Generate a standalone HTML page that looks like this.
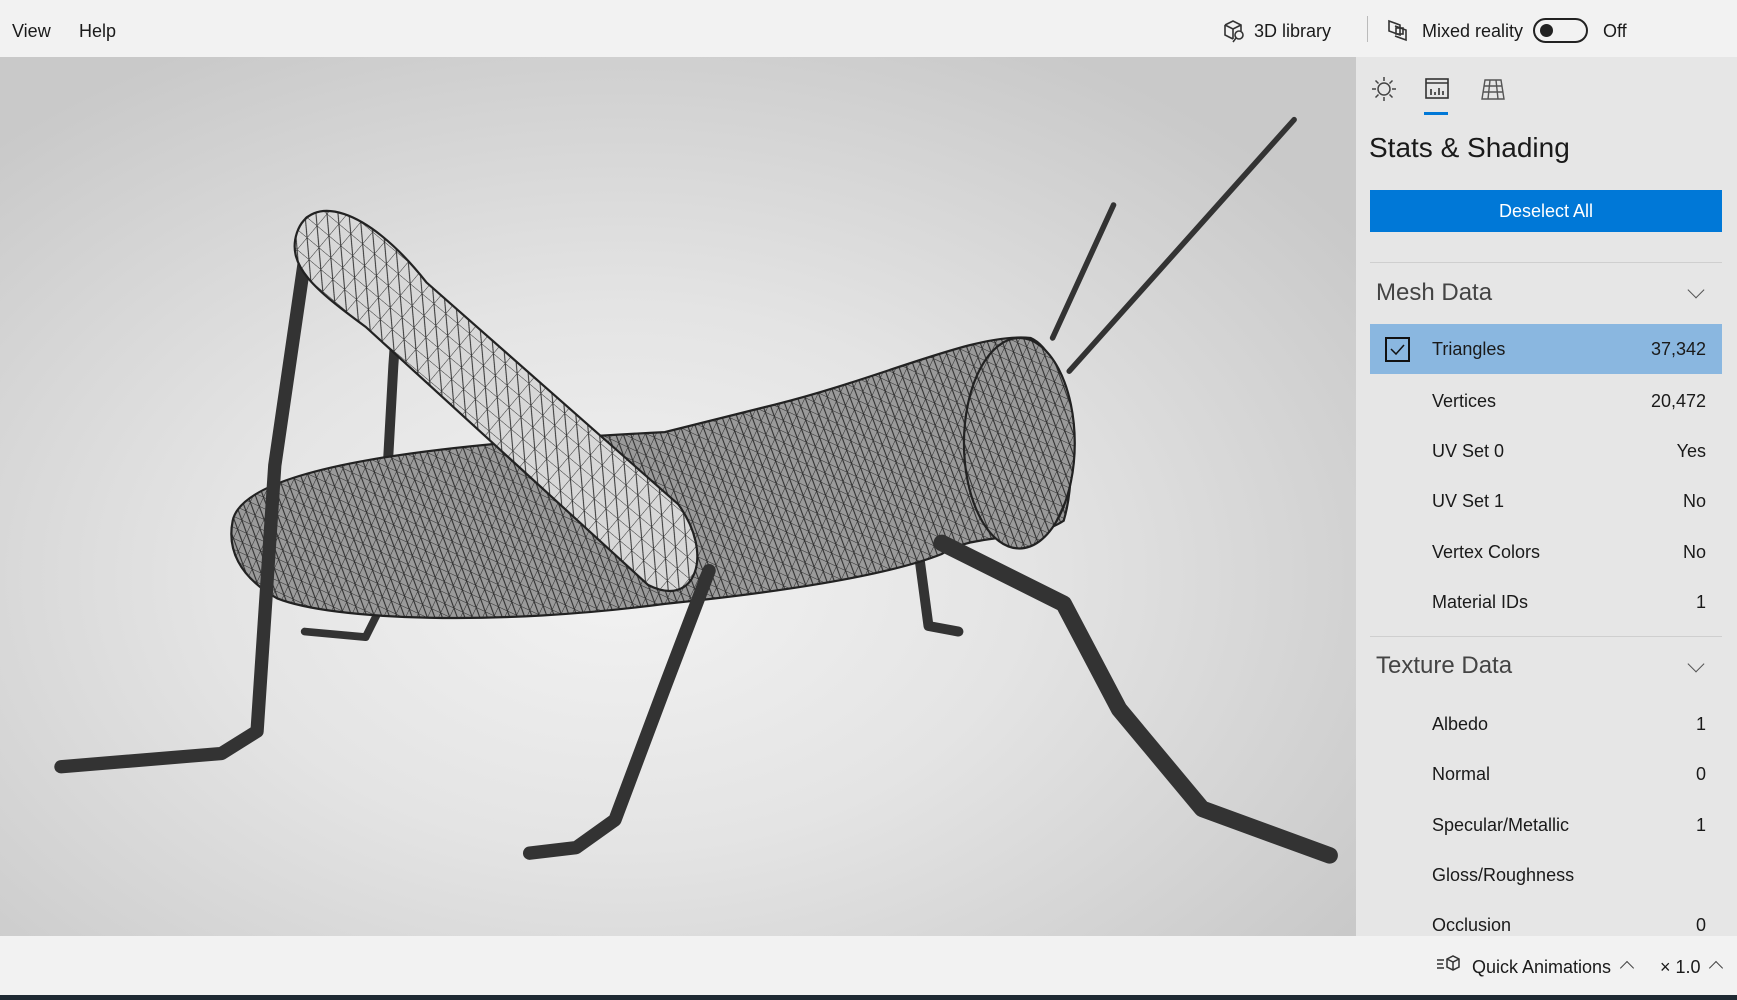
<!DOCTYPE html>
<html><head><meta charset="utf-8"><style>
*{margin:0;padding:0;box-sizing:border-box}
body{width:1737px;height:1000px;overflow:hidden;background:#f2f2f2;font-family:"Liberation Sans",sans-serif;color:#1a1a1a;position:relative}
.top{position:absolute;left:0;top:0;width:1737px;height:57px;background:#f2f2f2}
.t{position:absolute;font-size:18px;line-height:20px}
.view{position:absolute;left:0;top:57px;width:1356px;height:879px;background:radial-gradient(ellipse 900px 600px at 620px 520px,#f2f2f2 0%,#e4e4e4 45%,#c9c9c9 100%)}
.side{position:absolute;left:1356px;top:57px;width:381px;height:879px;background:#e6e6e6}
.bottom{position:absolute;left:0;top:936px;width:1737px;height:59px;background:#f2f2f2}
.dark{position:absolute;left:0;top:995px;width:1737px;height:5px;background:#1f2a33}
.row{position:absolute;left:1370px;width:352px;height:50px;font-size:18px}
.row .l{position:absolute;left:62px;top:15px}
.row .v{position:absolute;right:16px;top:15px}
.sep{position:absolute;left:1370px;width:352px;height:1px;background:#cfcfcf}
.hd{position:absolute;left:1376px;font-size:24px;color:#444}
.chev{position:absolute;left:1690px;width:12px;height:12px;border-right:1.5px solid #555;border-bottom:1.5px solid #555;transform:rotate(45deg)}
</style></head><body>
<div class="top">
 <div class="t" style="left:12px;top:21px">View</div>
 <div class="t" style="left:79px;top:21px">Help</div>
 <svg style="position:absolute;left:1222px;top:18px" width="26" height="26" viewBox="0 0 26 26" fill="none" stroke="#333" stroke-width="1.6"><path d="M3 7 L11 3 L19 7 L19 13 M3 7 L3 17 L11 21 M3 7 L11 11 L19 7 M11 11 L11 21"/><circle cx="17" cy="17" r="4"/><path d="M14 20 L11 24"/></svg>
 <div class="t" style="left:1254px;top:21px">3D library</div>
 <div style="position:absolute;left:1367px;top:16px;width:1px;height:26px;background:#bbb"></div>
 <svg style="position:absolute;left:1386px;top:17px" width="26" height="26" viewBox="0 0 26 26" fill="none" stroke="#333" stroke-width="1.6"><path d="M3 4 L14 8 L14 18 L3 14 Z M9 9 L20 13 L20 23 L9 19"/><rect x="10" y="11" width="7" height="6"/></svg>
 <div class="t" style="left:1422px;top:21px">Mixed reality</div>
 <div style="position:absolute;left:1533px;top:18px;width:55px;height:25px;border:2px solid #222;border-radius:13px"><div style="position:absolute;left:5px;top:4px;width:13px;height:13px;border-radius:50%;background:#222"></div></div>
 <div class="t" style="left:1603px;top:21px">Off</div>
</div>
<div class="view">
<svg width="1356" height="879" viewBox="0 0 1356 879">
<defs><pattern id="m" width="9" height="9" patternUnits="userSpaceOnUse" patternTransform="rotate(25)"><rect width="9" height="9" fill="#9a9a9a"/><path d="M0 0 L9 0 M0 0 L0 9 M0 0 L9 9" stroke="#2a2a2a" stroke-width="0.9"/></pattern>
<pattern id="m2" width="14" height="14" patternUnits="userSpaceOnUse" patternTransform="rotate(40)"><rect width="14" height="14" fill="#d8d8d8"/><path d="M0 0 L14 0 M0 0 L0 14 M0 0 L14 14" stroke="#333" stroke-width="0.9"/></pattern></defs>
<g transform="translate(0,-57) scale(1.108)">
<g stroke="#333" stroke-linecap="round" stroke-linejoin="round" fill="none">
<polyline points="360,260 355,330 350,420" stroke-width="9"/>
<polyline points="340,555 330,575 275,570" stroke-width="7"/>
<polyline points="830,505 838,565 865,570" stroke-width="9"/>
<line x1="950" y1="305" x2="1005" y2="185" stroke-width="5"/>
<line x1="965" y1="335" x2="1168" y2="108" stroke-width="5"/>
</g>
<path d="M210,470 C220,420 400,400 600,390 L700,365 C800,340 880,300 930,305 C965,320 975,420 960,470 C930,490 880,480 850,500 C800,520 700,535 600,545 C450,565 300,560 250,540 C215,520 205,495 210,470 Z" fill="url(#m)" stroke="#222" stroke-width="2"/>
<ellipse cx="920" cy="400" rx="50" ry="95" fill="url(#m)" stroke="#222" stroke-width="2"/>
<g stroke="#333" stroke-linecap="round" stroke-linejoin="round" fill="none">
<polyline points="280,200 248,420 232,660 200,680 55,692" stroke-width="12"/>
<polyline points="640,515 600,620 555,740 520,765 478,770" stroke-width="12"/>
<polyline points="850,490 960,545 1010,640 1085,730 1200,772" stroke-width="15"/>
</g>
<path d="M268,210 C280,175 330,185 385,255 L612,455 C645,500 628,550 585,528 L330,295 C285,262 258,240 268,210 Z" fill="url(#m2)" stroke="#222" stroke-width="2"/>
</g></svg>
</div>
<div class="side">
 <svg style="position:absolute;left:15px;top:19px" width="26" height="26" viewBox="0 0 26 26" fill="none" stroke="#444" stroke-width="1.5"><circle cx="13" cy="13" r="6"/><path d="M13 1v4M13 21v4M1 13h4M21 13h4M4.5 4.5l3 3M18.5 18.5l3 3M4.5 21.5l3-3M18.5 7.5l3-3"/></svg>
 <svg style="position:absolute;left:68px;top:19px" width="26" height="26" viewBox="0 0 26 26" fill="none" stroke="#333" stroke-width="1.6"><rect x="2" y="3" width="22" height="19"/><path d="M2 7h22M7 19v-6M11 19v-3M15 19v-7M19 19v-4"/></svg>
 <div style="position:absolute;left:68px;top:55px;width:24px;height:3px;background:#0078d7"></div>
 <svg style="position:absolute;left:124px;top:19px" width="26" height="26" viewBox="0 0 26 26" fill="none" stroke="#555" stroke-width="1.4"><path d="M5 4h16l3 19H2Z M10 4l-2 19M16 4l2 19M3.5 10h19M3 16h20"/></svg>
 <div style="position:absolute;left:13px;top:75px;font-size:28px;color:#1a1a1a">Stats &amp; Shading</div>
 <div style="position:absolute;left:14px;top:133px;width:352px;height:42px;background:#0078d7;color:#fff;font-size:18px;text-align:center;line-height:42px">Deselect All</div>
</div>
<div class="sep" style="top:262px"></div>
<div class="hd" style="top:279px">Mesh Data</div><div class="chev" style="top:284px"></div>
<div class="row" style="top:324px;background:#8ab7e0"><div style="position:absolute;left:15px;top:13px;width:25px;height:25px;border:2px solid #111"><svg width="21" height="21" viewBox="0 0 21 21"><path d="M4 10l5 5 8-9" stroke="#111" stroke-width="1.5" fill="none"/></svg></div><span class="l">Triangles</span><span class="v">37,342</span></div>
<div class="row" style="top:376px"><span class="l">Vertices</span><span class="v">20,472</span></div>
<div class="row" style="top:426px"><span class="l">UV Set 0</span><span class="v">Yes</span></div>
<div class="row" style="top:476px"><span class="l">UV Set 1</span><span class="v">No</span></div>
<div class="row" style="top:527px"><span class="l">Vertex Colors</span><span class="v">No</span></div>
<div class="row" style="top:577px"><span class="l">Material IDs</span><span class="v">1</span></div>
<div class="sep" style="top:636px"></div>
<div class="hd" style="top:652px">Texture Data</div><div class="chev" style="top:658px"></div>
<div class="row" style="top:699px"><span class="l">Albedo</span><span class="v">1</span></div>
<div class="row" style="top:749px"><span class="l">Normal</span><span class="v">0</span></div>
<div class="row" style="top:800px"><span class="l">Specular/Metallic</span><span class="v">1</span></div>
<div class="row" style="top:850px"><span class="l">Gloss/Roughness</span></div>
<div class="row" style="top:900px"><span class="l">Occlusion</span><span class="v">0</span></div>
<div class="bottom">
 <svg style="position:absolute;left:1436px;top:18px" width="26" height="22" viewBox="0 0 26 22" fill="none" stroke="#333" stroke-width="1.5"><path d="M1 6h7M1 10h6M1 14h7M11 5l6-3 6 3v8l-6 3-6-3Z M11 5l6 3 6-3M17 8v8"/></svg>
 <div class="t" style="left:1472px;top:21px">Quick Animations</div>
 <div style="position:absolute;left:1622px;top:27px;width:10px;height:10px;border-left:1.5px solid #444;border-top:1.5px solid #444;transform:rotate(45deg)"></div>
 <div class="t" style="left:1660px;top:21px">× 1.0</div>
 <div style="position:absolute;left:1711px;top:27px;width:10px;height:10px;border-left:1.5px solid #444;border-top:1.5px solid #444;transform:rotate(45deg)"></div>
</div>
<div class="dark"></div>
</body></html>
